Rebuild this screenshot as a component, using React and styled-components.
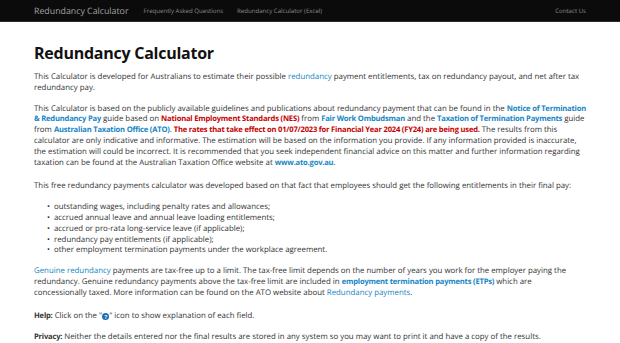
import React from 'react';
import styled, { createGlobalStyle } from 'styled-components';

const Global = createGlobalStyle`
  html, body {
    margin: 0;
    padding: 0;
    background: #fff;
  }
  body {
    font-family: "Open Sans", "Liberation Sans", sans-serif;
    color: #333;
  }
`;

const Navbar = styled.nav`
  height: 21px;
  background: #0b0b0b;
  border-bottom: 1px solid #2a2a2a;
  display: flex;
  align-items: center;
  padding: 0 34px;
`;

const Brand = styled.a`
  font-size: 8.8px;
  color: #a2a2a2;
  text-decoration: none;
  margin-right: 15px;
  text-rendering: geometricPrecision;
`;

const NavLink = styled.a`
  font-size: 6.1px;
  color: #8c8c8c;
  text-decoration: none;
  margin-right: ${(p) => (p.$end ? 0 : 14)}px;
  margin-left: ${(p) => (p.$end ? 'auto' : 0)};
  text-rendering: geometricPrecision;
`;

const Container = styled.main`
  width: 552px;
  padding: 20px 34px 0;
`;

const Title = styled.h1`
  font-size: 16px;
  font-weight: 700;
  letter-spacing: -0.25px;
  line-height: 22px;
  color: #111;
  margin: 0 0 8px;
`;

const textBlock = `
  font-size: 7.85px;
  line-height: 10.8px;
  text-rendering: geometricPrecision;

  strong {
    font-size: 7.6px;
    font-weight: 700;
    letter-spacing: -0.2px;
  }
`;

const P = styled.p`
  ${textBlock}
  margin: 0 0 ${(p) => p.$gap || 10}px;
`;

const A = styled.a`
  color: #1685c4;
  text-decoration: none;
  font-weight: ${(p) => (p.$bold ? 700 : 400)};
  font-size: ${(p) => (p.$bold ? '7.6px' : 'inherit')};
  letter-spacing: ${(p) => (p.$bold ? '-0.2px' : 'normal')};
`;

const Red = styled.strong`
  color: #c40000;
`;

const List = styled.ul`
  ${textBlock}
  margin: 0 0 10px;
  padding-left: 20px;

  li::marker {
    content: "•  ";
  }
`;

const HelpIcon = styled.span`
  display: inline-flex;
  align-items: center;
  justify-content: center;
  width: 7px;
  height: 7px;
  border-radius: 50%;
  background: #1a6fb5;
  color: #fff;
  font-size: 5.5px;
  font-weight: 700;
  vertical-align: -1px;
`;

export default function App() {
  return (
    <>
      <Global />
      <Navbar>
        <Brand href="#">Redundancy Calculator</Brand>
        <NavLink href="#">Frequently Asked Questions</NavLink>
        <NavLink href="#">Redundancy Calculator (Excel)</NavLink>
        <NavLink href="#" $end>Contact Us</NavLink>
      </Navbar>
      <Container>
        <Title>Redundancy Calculator</Title>
        <P>
          This Calculator is developed for Australians to estimate their possible{' '}
          <A href="#">redundancy</A> payment entitlements, tax on redundancy payout, and net after tax
          redundancy pay.
        </P>
        <P $gap={13}>
          This Calculator is based on the publicly available guidelines and publications about redundancy
          payment that can be found in the <A href="#" $bold>Notice of Termination &amp; Redundancy Pay</A>{' '}
          guide based on <Red>National Employment Standards (NES)</Red> from{' '}
          <A href="#" $bold>Fair Work Ombudsman</A> and the{' '}
          <A href="#" $bold>Taxation of Termination Payments</A> guide from{' '}
          <A href="#" $bold>Australian Taxation Office (ATO)</A>.{' '}
          <Red>The rates that take effect on 01/07/2023 for Financial Year 2024 (FY24) are being used.</Red>{' '}
          The results from this calculator are only indicative and informative. The estimation will be based
          on the information you provide. If any information provided is inaccurate, the estimation will
          could be incorrect. It is recommended that you seek independent financial advice on this matter and
          further information regarding taxation can be found at the Australian Taxation Office website at{' '}
          <A href="#" $bold>www.ato.gov.au</A>.
        </P>
        <P>
          This free redundancy payments calculator was developed based on that fact that employees should get
          the following entitlements in their final pay:
        </P>
        <List>
          <li>outstanding wages, including penalty rates and allowances;</li>
          <li>accrued annual leave and annual leave loading entitlements;</li>
          <li>accrued or pro-rata long-service leave (if applicable);</li>
          <li>redundancy pay entitlements (if applicable);</li>
          <li>other employment termination payments under the workplace agreement.</li>
        </List>
        <P $gap={12}>
          <A href="#">Genuine redundancy</A> payments are tax-free up to a limit. The tax-free limit depends on
          the number of years you work for the employer paying the redundancy. Genuine redundancy payments
          above the tax-free limit are included in{' '}
          <A href="#" $bold>employment termination payments (ETPs)</A> which are concessionally taxed. More
          information can be found on the ATO website about <A href="#">Redundancy payments</A>.
        </P>
        <P $gap={11}>
          <strong>Help:</strong> Click on the "<HelpIcon>?</HelpIcon>" icon to show explanation of each field.
        </P>
        <P>
          <strong>Privacy:</strong> Neither the details entered nor the final results are stored in any system
          so you may want to print it and have a copy of the results.
        </P>
      </Container>
    </>
  );
}
